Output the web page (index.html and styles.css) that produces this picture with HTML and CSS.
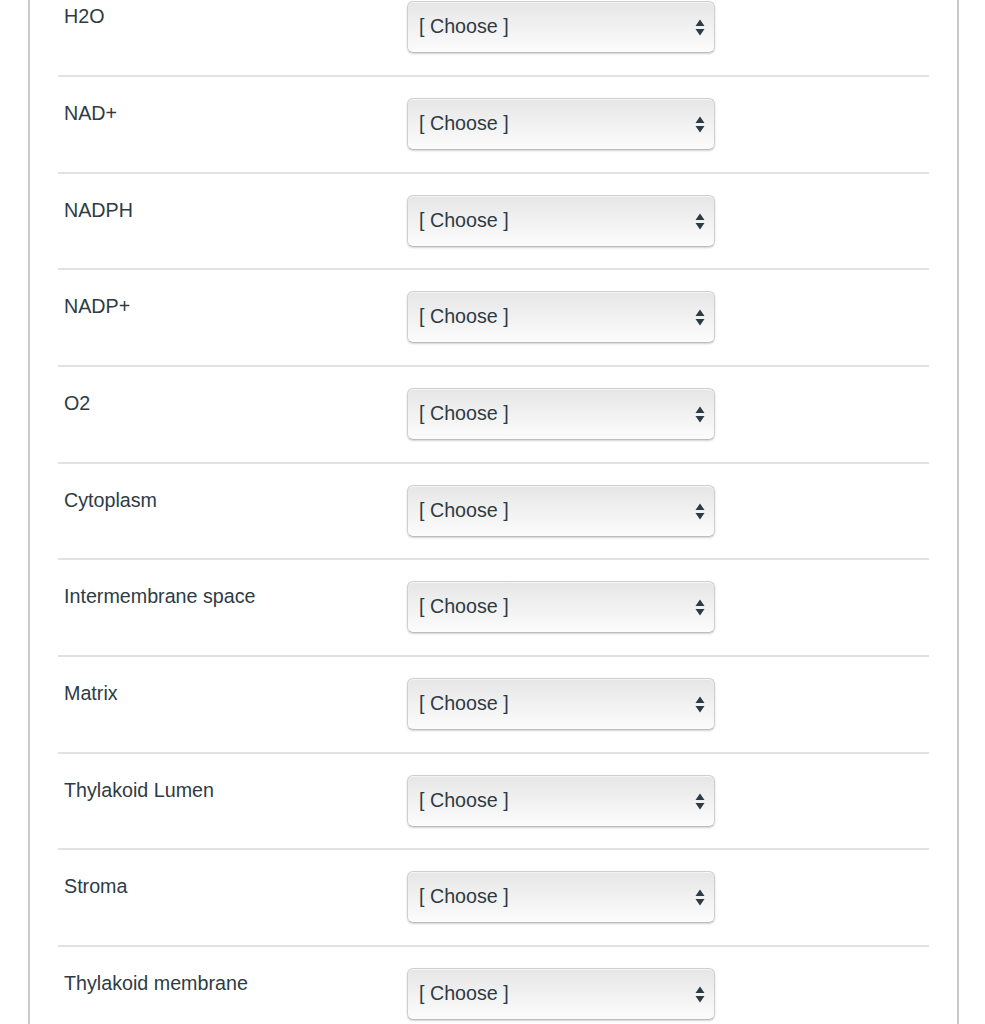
FILE: index.html
```html
<!DOCTYPE html>
<html>
<head>
<meta charset="utf-8">
<link rel="stylesheet" href="styles.css">
</head>
<body>
<div class="panel">
  <div class="list">
    <div class="row"><div class="label">H2O</div><div class="pick"><select class="sel"><option>[ Choose ]</option></select><svg class="arrows" width="10" height="17" viewBox="0 0 10 17"><path d="M5 0.5 L9.5 7 L0.5 7 Z M0.5 10 L9.5 10 L5 16.5 Z" fill="#2d3b45"/></svg></div></div>
    <div class="row"><div class="label">NAD+</div><div class="pick"><select class="sel"><option>[ Choose ]</option></select><svg class="arrows" width="10" height="17" viewBox="0 0 10 17"><path d="M5 0.5 L9.5 7 L0.5 7 Z M0.5 10 L9.5 10 L5 16.5 Z" fill="#2d3b45"/></svg></div></div>
    <div class="row"><div class="label">NADPH</div><div class="pick"><select class="sel"><option>[ Choose ]</option></select><svg class="arrows" width="10" height="17" viewBox="0 0 10 17"><path d="M5 0.5 L9.5 7 L0.5 7 Z M0.5 10 L9.5 10 L5 16.5 Z" fill="#2d3b45"/></svg></div></div>
    <div class="row"><div class="label">NADP+</div><div class="pick"><select class="sel"><option>[ Choose ]</option></select><svg class="arrows" width="10" height="17" viewBox="0 0 10 17"><path d="M5 0.5 L9.5 7 L0.5 7 Z M0.5 10 L9.5 10 L5 16.5 Z" fill="#2d3b45"/></svg></div></div>
    <div class="row"><div class="label">O2</div><div class="pick"><select class="sel"><option>[ Choose ]</option></select><svg class="arrows" width="10" height="17" viewBox="0 0 10 17"><path d="M5 0.5 L9.5 7 L0.5 7 Z M0.5 10 L9.5 10 L5 16.5 Z" fill="#2d3b45"/></svg></div></div>
    <div class="row"><div class="label">Cytoplasm</div><div class="pick"><select class="sel"><option>[ Choose ]</option></select><svg class="arrows" width="10" height="17" viewBox="0 0 10 17"><path d="M5 0.5 L9.5 7 L0.5 7 Z M0.5 10 L9.5 10 L5 16.5 Z" fill="#2d3b45"/></svg></div></div>
    <div class="row"><div class="label">Intermembrane space</div><div class="pick"><select class="sel"><option>[ Choose ]</option></select><svg class="arrows" width="10" height="17" viewBox="0 0 10 17"><path d="M5 0.5 L9.5 7 L0.5 7 Z M0.5 10 L9.5 10 L5 16.5 Z" fill="#2d3b45"/></svg></div></div>
    <div class="row"><div class="label">Matrix</div><div class="pick"><select class="sel"><option>[ Choose ]</option></select><svg class="arrows" width="10" height="17" viewBox="0 0 10 17"><path d="M5 0.5 L9.5 7 L0.5 7 Z M0.5 10 L9.5 10 L5 16.5 Z" fill="#2d3b45"/></svg></div></div>
    <div class="row"><div class="label">Thylakoid Lumen</div><div class="pick"><select class="sel"><option>[ Choose ]</option></select><svg class="arrows" width="10" height="17" viewBox="0 0 10 17"><path d="M5 0.5 L9.5 7 L0.5 7 Z M0.5 10 L9.5 10 L5 16.5 Z" fill="#2d3b45"/></svg></div></div>
    <div class="row"><div class="label">Stroma</div><div class="pick"><select class="sel"><option>[ Choose ]</option></select><svg class="arrows" width="10" height="17" viewBox="0 0 10 17"><path d="M5 0.5 L9.5 7 L0.5 7 Z M0.5 10 L9.5 10 L5 16.5 Z" fill="#2d3b45"/></svg></div></div>
    <div class="row"><div class="label">Thylakoid membrane</div><div class="pick"><select class="sel"><option>[ Choose ]</option></select><svg class="arrows" width="10" height="17" viewBox="0 0 10 17"><path d="M5 0.5 L9.5 7 L0.5 7 Z M0.5 10 L9.5 10 L5 16.5 Z" fill="#2d3b45"/></svg></div></div>
  </div>
</div>
</body>
</html>
```
FILE: styles.css
```css
html, body {
  margin: 0;
  padding: 0;
  background: #fff;
  overflow: hidden;
}
body {
  font-family: "Liberation Sans", Arial, sans-serif;
  color: #2d3b45;
}
.panel {
  margin-left: 28px;
  width: 927px;
  border-left: 2px solid #c9c9c9;
  border-right: 2px solid #c9c9c9;
  min-height: 1100px;
}
.list {
  margin: -21.67px 28px 0 28px;
}
.row {
  display: flex;
  align-items: flex-start;
  height: 94.67px;
  border-top: 2px solid #e2e2e2;
  box-sizing: content-box;
}
.label {
  width: 343px;
  padding-left: 6px;
  padding-top: 25px;
  font-size: 19.7px;
  line-height: 22px;
}
.pick {
  position: relative;
  margin-top: 21px;
  width: 308px;
  height: 52px;
}
.sel {
  -webkit-appearance: none;
  appearance: none;
  display: block;
  width: 308px;
  height: 52px;
  margin: 0;
  padding: 0 0 2px 11px;
  border: 1px solid #cfcfcf;
  border-bottom-color: #bdbdbd;
  border-radius: 6px;
  background: linear-gradient(to bottom, #e6e6e6 0%, #f0f0f0 45%, #fcfcfc 100%);
  box-shadow: 0 1px 2px rgba(0,0,0,0.18), inset 0 1px 0 rgba(255,255,255,0.6);
  font-family: "Liberation Sans", Arial, sans-serif;
  font-size: 19.7px;
  color: #2d3b45;
  outline: none;
}
.arrows {
  position: absolute;
  left: 288px;
  top: 18px;
  pointer-events: none;
}
```
